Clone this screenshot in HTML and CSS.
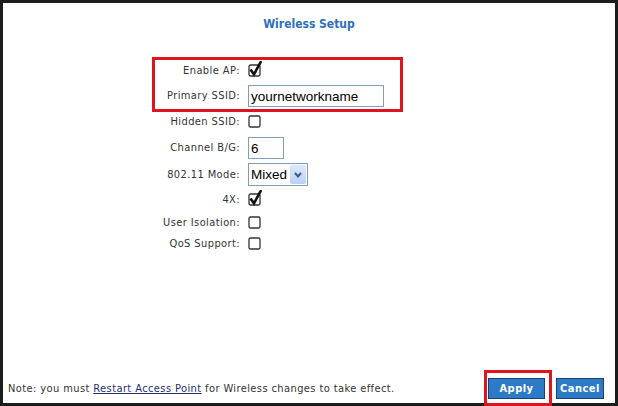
FILE: index.html
```html
<!DOCTYPE html>
<html>
<head>
<meta charset="utf-8">
<link rel="stylesheet" href="styles.css">
</head>
<body>
<div class="frame">
  <h1 class="title">Wireless Setup</h1>
  <div class="form">
    <label class="lbl">Enable AP:</label>
    <span class="ctl"><svg class="cb" viewBox="0 0 14 17" width="14" height="17"><rect x="1" y="4" width="11" height="11" rx="1.5" fill="#fff" stroke="#333" stroke-width="1.3"/><path d="M3.2 9.5 L6 13.3 L12.6 1.2" fill="none" stroke="#111" stroke-width="2.6" stroke-linecap="square"/></svg></span>

    <label class="lbl">Primary SSID:</label>
    <span class="ctl"><span class="input wide">yournetworkname</span></span>

    <label class="lbl">Hidden SSID:</label>
    <span class="ctl"><svg class="cb" viewBox="0 0 14 17" width="14" height="17"><rect x="1" y="4" width="11" height="11" rx="1.5" fill="#fff" stroke="#333" stroke-width="1.3"/></svg></span>

    <label class="lbl">Channel B/G:</label>
    <span class="ctl"><span class="input narrow">6</span></span>

    <label class="lbl">802.11 Mode:</label>
    <span class="ctl"><span class="select"><span class="sel-text">Mixed</span><span class="sel-btn"><svg viewBox="0 0 10 8" width="10" height="8"><path d="M2 2 L5 5.5 L8 2" fill="none" stroke="#3c5a8c" stroke-width="2"/></svg></span></span></span>

    <label class="lbl">4X:</label>
    <span class="ctl"><svg class="cb" viewBox="0 0 14 17" width="14" height="17"><rect x="1" y="4" width="11" height="11" rx="1.5" fill="#fff" stroke="#333" stroke-width="1.3"/><path d="M3.2 9.5 L6 13.3 L12.6 1.2" fill="none" stroke="#111" stroke-width="2.6" stroke-linecap="square"/></svg></span>

    <label class="lbl">User Isolation:</label>
    <span class="ctl"><svg class="cb" viewBox="0 0 14 17" width="14" height="17"><rect x="1" y="4" width="11" height="11" rx="1.5" fill="#fff" stroke="#333" stroke-width="1.3"/></svg></span>

    <label class="lbl">QoS Support:</label>
    <span class="ctl"><svg class="cb" viewBox="0 0 14 17" width="14" height="17"><rect x="1" y="4" width="11" height="11" rx="1.5" fill="#fff" stroke="#333" stroke-width="1.3"/></svg></span>
  </div>

  <div class="footer">
    <p class="note">Note: you must <a class="link" href="#">Restart Access Point</a> for Wireless changes to take effect.</p>
    <div class="buttons">
      <button class="btn apply">Apply</button>
      <button class="btn cancel">Cancel</button>
    </div>
  </div>

  <div class="hl hl-form"></div>
  <div class="hl hl-apply"></div>
</div>
</body>
</html>
```

FILE: styles.css
```css
html, body {
  margin: 0;
  padding: 0;
  background: #fff;
}

.frame {
  position: relative;
  box-sizing: border-box;
  width: 618px;
  height: 406px;
  border: 3px solid #1c1c1c;
  display: flex;
  flex-direction: column;
  font-family: "DejaVu Sans Condensed", "DejaVu Sans", sans-serif;
  font-size: 11px;
  letter-spacing: 0.4px;
  color: #333;
}

.title {
  margin: 13px 0 0;
  text-align: center;
  font-size: 12px;
  line-height: 16px;
  font-weight: bold;
  letter-spacing: 0;
  color: #2d6fba;
}

.form {
  margin-top: 27px;
  display: grid;
  grid-template-columns: 237px auto;
  grid-template-rows: 24px 26px 26px 26px 27px 24px 22px 20px;
  column-gap: 8px;
  align-items: center;
}

.lbl {
  text-align: right;
  color: #333;
  line-height: 14px;
}

.ctl {
  display: flex;
  align-items: center;
}

.cb {
  display: block;
  margin-top: -3px;
}

.input {
  box-sizing: border-box;
  display: flex;
  align-items: center;
  height: 22px;
  border: 1px solid #7f9db9;
  padding: 0 2px;
  font-family: "Liberation Sans", Arial, sans-serif;
  font-size: 13.5px;
  letter-spacing: 0;
  color: #000;
}

.wide { width: 136px; }
.narrow { width: 36px; }

.select {
  box-sizing: border-box;
  display: flex;
  align-items: stretch;
  width: 60px;
  height: 23px;
  border: 1px solid #7f9db9;
  font-family: "Liberation Sans", Arial, sans-serif;
  font-size: 13.5px;
  letter-spacing: 0;
  color: #000;
}

.sel-text {
  flex: 1;
  display: flex;
  align-items: center;
  padding-left: 2px;
}

.sel-btn {
  width: 16px;
  margin: 1px;
  background: linear-gradient(#dde8fd, #bcd0f6);
  border-radius: 2px;
  display: flex;
  align-items: center;
  justify-content: center;
}

.footer {
  margin-top: auto;
  display: flex;
  align-items: center;
  justify-content: space-between;
  padding: 0 11px 4px 5px;
}

.note {
  margin: 0;
  color: #333;
}

.link {
  color: #1f2f6e;
  text-decoration: underline;
}

.buttons {
  display: flex;
  gap: 11px;
}

.btn {
  box-sizing: border-box;
  height: 21px;
  border: 1px solid #1c3e70;
  background: #2c7bc6;
  color: #fff;
  font-family: "DejaVu Sans Condensed", "DejaVu Sans", sans-serif;
  font-weight: bold;
  font-size: 11px;
  padding: 0;
  letter-spacing: 0.5px;
}

.apply { width: 57px; }
.cancel { width: 48px; }

.hl {
  position: absolute;
  box-sizing: border-box;
  border: 3px solid #e0141e;
}

.hl-form {
  left: 149px;
  top: 54px;
  width: 251px;
  height: 55px;
}

.hl-apply {
  left: 481px;
  top: 367px;
  width: 68px;
  height: 36px;
}
```
